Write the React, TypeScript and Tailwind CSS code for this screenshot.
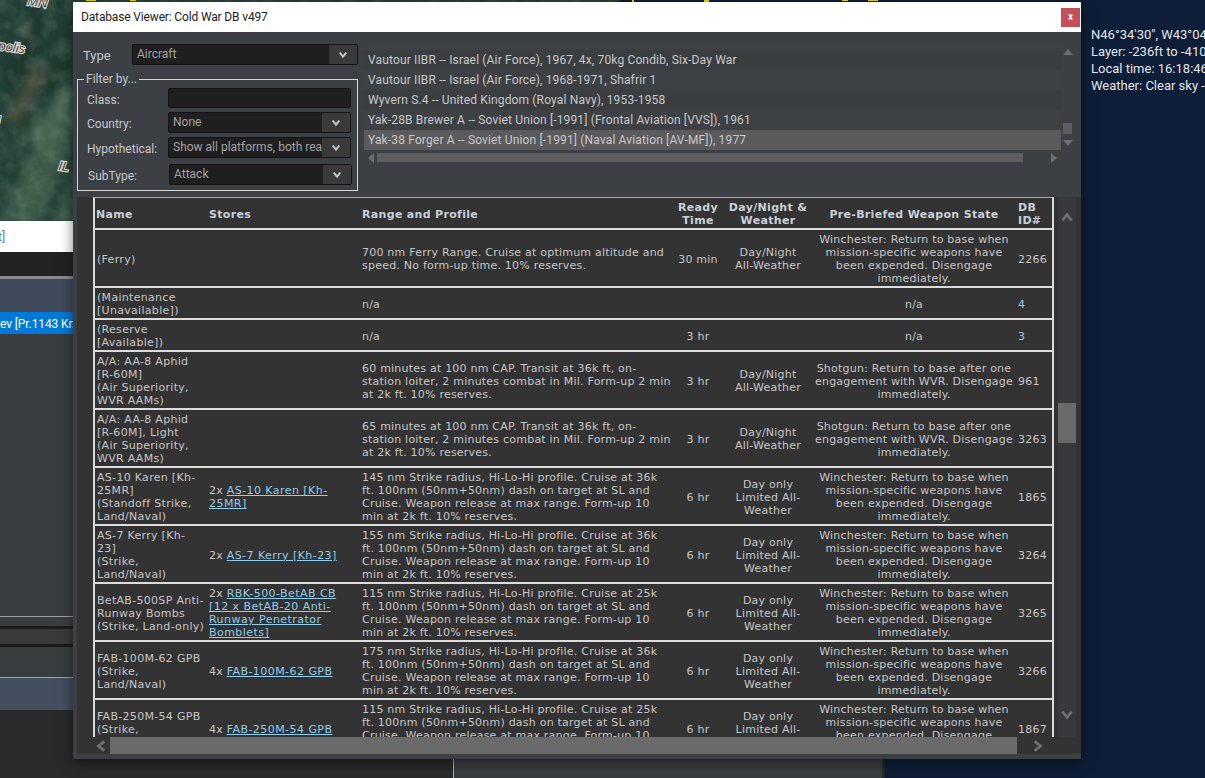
const ui = "font-['Roboto',sans-serif]";

type Row = {
  name: string;
  count?: string;
  link?: string;
  range: string;
  ready?: string;
  day?: string;
  state: string;
  id: string;
  idLink?: boolean;
};

const winchester = "Winchester: Return to base when\nmission-specific weapons have\nbeen expended. Disengage\nimmediately.";
const shotgun = "Shotgun: Return to base after one\nengagement with WVR. Disengage\nimmediately.";
const limited = "Day only\nLimited All-\nWeather";
const allWeather = "Day/Night\nAll-Weather";

function strike(nm: string, alt: string) {
  return `${nm} nm Strike radius, Hi-Lo-Hi profile. Cruise at ${alt}k\nft. 100nm (50nm+50nm) dash on target at SL and\nCruise. Weapon release at max range. Form-up 10\nmin at 2k ft. 10% reserves.`;
}

function cap(min: string) {
  return `${min} minutes at 100 nm CAP. Transit at 36k ft, on-\nstation loiter, 2 minutes combat in Mil. Form-up 2 min\nat 2k ft. 10% reserves.`;
}

const rows: Row[] = [
  { name: "(Ferry)", range: "700 nm Ferry Range. Cruise at optimum altitude and\nspeed. No form-up time. 10% reserves.", ready: "30 min", day: allWeather, state: winchester, id: "2266" },
  { name: "(Maintenance\n[Unavailable])", range: "n/a", state: "n/a", id: "4", idLink: true },
  { name: "(Reserve\n[Available])", range: "n/a", ready: "3 hr", state: "n/a", id: "3", idLink: true },
  { name: "A/A: AA-8 Aphid\n[R-60M]\n(Air Superiority,\nWVR AAMs)", range: cap("60"), ready: "3 hr", day: allWeather, state: shotgun, id: "961" },
  { name: "A/A: AA-8 Aphid\n[R-60M], Light\n(Air Superiority,\nWVR AAMs)", range: cap("65"), ready: "3 hr", day: allWeather, state: shotgun, id: "3263" },
  { name: "AS-10 Karen [Kh-\n25MR]\n(Standoff Strike,\nLand/Naval)", count: "2x", link: "AS-10 Karen [Kh-\n25MR]", range: strike("145", "36"), ready: "6 hr", day: limited, state: winchester, id: "1865" },
  { name: "AS-7 Kerry [Kh-\n23]\n(Strike,\nLand/Naval)", count: "2x", link: "AS-7 Kerry [Kh-23]", range: strike("155", "36"), ready: "6 hr", day: limited, state: winchester, id: "3264" },
  { name: "BetAB-500SP Anti-\nRunway Bombs\n(Strike, Land-only)", count: "2x", link: "RBK-500-BetAB CB\n[12 x BetAB-20 Anti-\nRunway Penetrator\nBomblets]", range: strike("115", "25"), ready: "6 hr", day: limited, state: winchester, id: "3265" },
  { name: "FAB-100M-62 GPB\n(Strike,\nLand/Naval)", count: "4x", link: "FAB-100M-62 GPB", range: strike("175", "36"), ready: "6 hr", day: limited, state: winchester, id: "3266" },
  { name: "FAB-250M-54 GPB\n(Strike,\nLand/Naval)", count: "4x", link: "FAB-250M-54 GPB", range: strike("115", "25"), ready: "6 hr", day: limited, state: winchester, id: "1867" },
];

const listRows = [
  "Vautour IIBR -- Israel (Air Force), 1967, 4x, 70kg Condib, Six-Day War",
  "Vautour IIBR -- Israel (Air Force), 1968-1971, Shafrir 1",
  "Wyvern S.4 -- United Kingdom (Royal Navy), 1953-1958",
  "Yak-28B Brewer A -- Soviet Union [-1991] (Frontal Aviation [VVS]), 1961",
  "Yak-38 Forger A -- Soviet Union [-1991] (Naval Aviation [AV-MF]), 1977",
];

function Chevron({ dir, size = 12, color = "#c9c9c9" }: { dir: "up" | "down" | "left" | "right"; size?: number; color?: string }) {
  const points = {
    up: "2,9 6,4 10,9",
    down: "2,3 6,8 10,3",
    left: "8,2 3,6 8,10",
    right: "4,2 9,6 4,10",
  }[dir];
  return (
    <svg width={size} height={size} viewBox="0 0 12 12" fill="none">
      <polyline points={points} stroke={color} strokeWidth="2.4" />
    </svg>
  );
}

function Tri({ dir }: { dir: "up" | "down" | "left" | "right" }) {
  const points = {
    up: "0,6 5,0 10,6",
    down: "0,0 5,6 10,0",
    left: "6,0 6,10 0,5",
    right: "0,0 0,10 6,5",
  }[dir];
  const tall = dir === "left" || dir === "right";
  return (
    <svg width={tall ? 6 : 10} height={tall ? 10 : 6}>
      <polygon points={points} fill="#6b6e70" />
    </svg>
  );
}

function Select({ text, className }: { text: string; className: string }) {
  return (
    <div className={`flex h-[21px] items-stretch rounded-[2px] border border-[#141414] bg-[#1f1f1f] ${className}`}>
      <div className="min-w-0 flex-1 overflow-hidden whitespace-nowrap pl-[4px] text-[12px] leading-[18px] text-[#a2a2a2]">{text}</div>
      <div className="flex w-[28px] items-center justify-center bg-[#3a3a3a]">
        <Chevron dir="down" size={10} color="#c9c9c9" />
      </div>
    </div>
  );
}

function Filters() {
  const label = "w-[81px] pt-[2px] text-[12px] leading-[21px] text-[#c4c8cc]";
  return (
    <div className="flex w-[281px] flex-col">
      <div className="flex h-[21px] items-center">
        <div className="w-[55px] pl-[6px] pt-[2px] text-[13px] leading-[21px] text-[#c4c8cc]">Type</div>
        <Select text="Aircraft" className="w-[226px]" />
      </div>
      <fieldset className="mt-[6px] h-[120px] border border-[#d8d8d8] pl-[9px]">
        <legend className="-ml-[3px] px-[2px] text-[12px] leading-[16px] text-[#c4c8cc]">Filter by...</legend>
        <div className="mt-[1px] flex flex-col">
          <div className="flex h-[20px]">
            <div className={label}>Class:</div>
            <div className="w-[183px] rounded-[2px] border border-[#141414] bg-[#1f1f1f]" />
          </div>
          <div className="mt-[4px] flex h-[21px]">
            <div className={label}>Country:</div>
            <Select text="None" className="w-[183px]" />
          </div>
          <div className="mt-[4px] flex h-[21px]">
            <div className={label}>Hypothetical:</div>
            <Select text="Show all platforms, both real and hypothetical" className="w-[183px]" />
          </div>
          <div className="mt-[6px] flex h-[21px] pl-px">
            <div className={label}>SubType:</div>
            <Select text="Attack" className="w-[183px]" />
          </div>
        </div>
      </fieldset>
    </div>
  );
}

function PlatformList() {
  return (
    <div className="ml-[6px] flex w-[711px] flex-col">
      <div className="flex h-[106px]">
        <div className="flex w-[697px] flex-col text-[12px] tracking-[0.15px] text-[#c6c8ca]">
          <div className="h-[6px] overflow-hidden bg-[#3e4144]">
            <div className="-mt-[17px] h-[20px] whitespace-nowrap pl-[4px] leading-[20px]">Vautour IIBR -- Israel (Air Force), 1967, 2x, 70kg Condib</div>
          </div>
          {listRows.map((row, i) => (
            <div key={row} className={`h-[20px] whitespace-nowrap pl-[4px] leading-[20px] ${i === 4 ? "bg-[#5b5b5b]" : i % 2 ? "bg-[#3e4144]" : "bg-[#3b3e41]"}`}>
              {row}
            </div>
          ))}
        </div>
        <div className="flex flex-1 flex-col items-center pt-[5px] pr-[1px]">
          <Tri dir="up" />
          <div className="mt-[68px] h-[11px] w-[9px] bg-[#5e5e5e]" />
          <div className="mt-[6px]">
            <Tri dir="down" />
          </div>
        </div>
      </div>
      <div className="mt-[3px] flex h-[9px] w-[697px] items-center pl-[4px]">
        <Tri dir="left" />
        <div className="ml-[3px] h-[9px] w-[646px] bg-[#5e5e5e]" />
        <div className="ml-[28px]">
          <Tri dir="right" />
        </div>
      </div>
    </div>
  );
}

function DataTable() {
  const cell = "border-b-2 border-[#dcdcdc] pt-[3px] pb-[1px] align-middle";
  const head = "border-b-2 border-[#dcdcdc] pt-[3px] pb-[1px] align-middle font-bold tracking-[0.32px] text-[#c9d0d6]";
  return (
    <div className="h-[540px] w-[961px] overflow-hidden border-x-2 border-t border-x-[#dcdcdc] border-t-[#a8a8a8] bg-[#333333]">
      <table className="w-[957px] table-fixed border-collapse font-['DejaVu_Sans',sans-serif] text-[11px] leading-[13px] tracking-[0.22px] text-[#c6c6c6]">
        <colgroup>
          <col className="w-[112px]" />
          <col className="w-[153px]" />
          <col className="w-[314px]" />
          <col className="w-[48px]" />
          <col className="w-[92px]" />
          <col className="w-[200px]" />
          <col className="w-[38px]" />
        </colgroup>
        <thead>
          <tr>
            <th className={`${head} pl-[1px] text-left`}>Name</th>
            <th className={`${head} pl-[2px] text-left`}>Stores</th>
            <th className={`${head} pl-[2px] text-left`}>Range and Profile</th>
            <th className={`${head} whitespace-pre-line text-center`}>{"Ready\nTime"}</th>
            <th className={`${head} whitespace-pre-line text-center`}>{"Day/Night &\nWeather"}</th>
            <th className={`${head} text-center`}>Pre-Briefed Weapon State</th>
            <th className={`${head} whitespace-pre-line pl-[4px] text-left`}>{"DB\nID#"}</th>
          </tr>
        </thead>
        <tbody>
          {rows.map((r) => (
            <tr key={r.id}>
              <td className={`${cell} whitespace-pre-line pl-[2px] tracking-[0.3px]`}>{r.name}</td>
              <td className={`${cell} whitespace-pre-line pl-[2px]`}>
                {r.count && `${r.count} `}
                {r.link && <span className="tracking-[0.45px] text-[#8fcdea] underline">{r.link}</span>}
              </td>
              <td className={`${cell} whitespace-pre-line pl-[2px]`}>{r.range}</td>
              <td className={`${cell} text-center`}>{r.ready}</td>
              <td className={`${cell} whitespace-pre-line text-center`}>{r.day}</td>
              <td className={`${cell} whitespace-pre-line text-center`}>{r.state}</td>
              <td className={`${cell} pl-[4px] ${r.idLink ? "text-[#8fcdea]" : ""}`}>{r.id}</td>
            </tr>
          ))}
        </tbody>
      </table>
    </div>
  );
}

function DatabaseWindow() {
  return (
    <div className={`absolute left-[73px] top-[2px] flex h-[757px] w-[1008px] flex-col bg-[#3c3f43] shadow-[0_4px_12px_rgba(0,0,0,0.5)] ${ui}`}>
      <div className="flex h-[30px] items-center justify-between bg-white pl-[8px] pr-[1px]">
        <div className="text-[12px] tracking-[-0.15px] text-[#1c1c1c]">Database Viewer: Cold War DB v497</div>
        <div className="flex h-[19px] w-[19px] items-center justify-center bg-[#c44f57] text-[10px] font-bold leading-none text-white">x</div>
      </div>
      <div className="flex flex-col pl-[4px] pt-[12px]">
        <div className="flex h-[153px]">
          <Filters />
          <PlatformList />
        </div>
        <div className="flex flex-col bg-[#333333]">
          <div className="flex h-[540px]">
            <div className="w-[16px]" />
            <DataTable />
            <div className="ml-[4px] flex w-[18px] flex-col items-center bg-[#38393b]">
              <div className="flex h-[41px] items-center pb-[2px]">
                <Chevron dir="up" size={14} color="#6f6f6f" />
              </div>
              <div className="mt-[165px] h-[40px] w-full bg-[#6a6a6a]" />
              <div className="flex-1" />
              <div className="flex h-[44px] items-center">
                <Chevron dir="down" size={14} color="#6f6f6f" />
              </div>
            </div>
          </div>
          <div className="flex h-[17px]">
            <div className="w-[16px]" />
            <div className="flex w-[17px] items-center justify-center">
              <Chevron dir="left" size={14} color="#6f6f6f" />
            </div>
            <div className="w-[907px] bg-[#6a6a6a]" />
            <div className="flex w-[40px] items-center justify-center">
              <Chevron dir="right" size={14} color="#6f6f6f" />
            </div>
          </div>
        </div>
      </div>
    </div>
  );
}

function SatelliteMap() {
  return (
    <svg width="885" height="221" className="block">
      <defs>
        <filter id="soft">
          <feGaussianBlur stdDeviation="4" />
        </filter>
        <filter id="grain">
          <feTurbulence type="fractalNoise" baseFrequency="0.07" numOctaves="3" seed="4" />
          <feColorMatrix values="0 0 0 0 0.5  0 0 0 0 0.6  0 0 0 0 0.5  1.6 0 0 0 -0.6" />
        </filter>
      </defs>
      <rect width="885" height="221" fill="#223f35" />
      <g filter="url(#soft)">
        <polygon points="6,118 40,62 46,76 14,128" fill="#4c4e3c" />
        <polygon points="0,221 32,150 73,85 73,130 40,221" fill="#3c5a49" />
        <polygon points="0,80 40,0 62,0 20,90" fill="#1c382d" />
        <polygon points="44,90 73,20 73,70 50,100" fill="#1b372c" />
        <polygon points="26,140 64,86 73,100 44,150" fill="#4a6452" />
        <polygon points="52,221 73,170 73,221" fill="#365445" />
        <circle cx="24" cy="30" r="4" fill="#6f806c" />
      </g>
      <rect width="885" height="221" filter="url(#grain)" opacity="0.22" />
      <rect x="620" width="265" height="221" fill="#0e1e38" />
      <g fontFamily="Liberation Sans, sans-serif" fontStyle="italic" fontSize="13" fill="#4a3a34" stroke="#e4e4e4" strokeWidth="2" paintOrder="stroke">
        <text x="-2" y="50" transform="rotate(8 0 50)">polis</text>
        <text x="27" y="5" transform="rotate(8 27 5)">MN</text>
        <text x="58" y="170" transform="rotate(8 58 170)">IL</text>
        <text x="-6" y="125">J</text>
      </g>
      <g fill="#e8e000">
        <rect x="86" y="0" width="10" height="1" />
        <rect x="130" y="0" width="6" height="1" />
        <rect x="632" y="0" width="2" height="2" />
        <rect x="704" y="0" width="5" height="2" />
        <rect x="842" y="0" width="6" height="1" />
        <rect x="868" y="0" width="10" height="1" />
      </g>
    </svg>
  );
}

function BackgroundApp() {
  return (
    <div className={`flex h-[778px] w-[885px] flex-col border-r-[3px] border-[#26282b] ${ui}`}>
      <SatelliteMap />
      <div className="h-[31px] bg-white text-[12px] leading-[33px] text-[#4a7fb0]">
        <span className="-ml-[2px]">t]</span>
      </div>
      <div className="h-[24px] bg-[#222222]" />
      <div className="h-[3px] bg-[#8a8a8a]" />
      <div className="h-[33px] bg-[#3f4a5c]" />
      <div className="h-[22px] whitespace-nowrap bg-[#0078d7] text-[12px] leading-[24px] tracking-[-0.1px] text-white">
        ev [Pr.1143 Kr.
      </div>
      <div className="h-[282px] bg-[#3a3d40]" />
      <div className="h-px bg-[#a0a0a0]" />
      <div className="h-[9px] bg-[#3a3d40]" />
      <div className="h-[3px] bg-[#1b1b1b]" />
      <div className="h-[15px] bg-[#3a3a3a]" />
      <div className="h-[3px] bg-[#1b1b1b]" />
      <div className="h-[30px] bg-[#3a3d40]" />
      <div className="h-px bg-[#a0a0a0]" />
      <div className="h-[32px] bg-[#434e60]" />
      <div className="flex flex-1">
        <div className="w-[454px] border-r border-[#b0b0b0] bg-[#2a2a2a]" />
        <div className="flex-1 bg-[#3a3d40]" />
      </div>
    </div>
  );
}

export default function App() {
  return (
    <div className="relative h-[778px] w-[1205px] overflow-hidden bg-[#0e1e38]">
      <BackgroundApp />
      <DatabaseWindow />
      <div className={`absolute left-[1091px] top-[26px] whitespace-nowrap text-[13px] leading-[17px] text-[#e2e4e6] ${ui}`}>
        <div>N46°34'30", W43°04'12"</div>
        <div>Layer: -236ft to -410ft</div>
        <div>Local time: 16:18:46</div>
        <div>Weather: Clear sky - calm</div>
      </div>
    </div>
  );
}
